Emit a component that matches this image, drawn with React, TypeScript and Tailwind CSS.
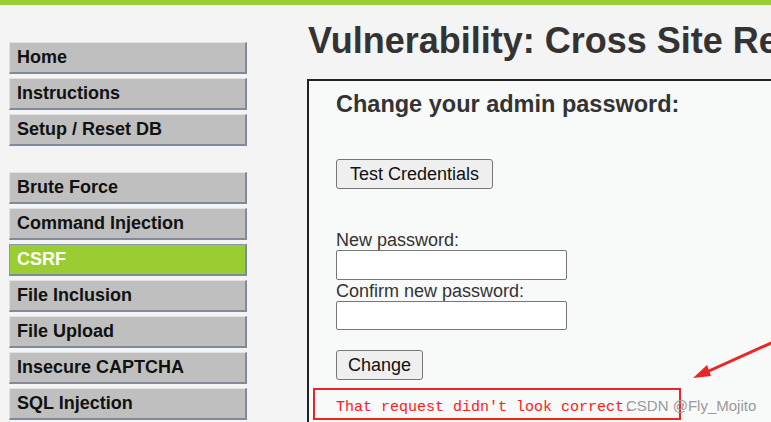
import React from 'react';

const topMenu = ['Home', 'Instructions', 'Setup / Reset DB'];
const vulnMenu = [
  'Brute Force',
  'Command Injection',
  'CSRF',
  'File Inclusion',
  'File Upload',
  'Insecure CAPTCHA',
  'SQL Injection',
];

const MenuItem: React.FC<{ label: string; selected?: boolean }> = ({ label, selected }) => {
  const base =
    'h-[32px] flex items-center pl-[7px] text-[18px] font-bold border-t border-l border-b-2 border-r-2';
  return (
    <div
      className={
        selected
          ? `${base} bg-[#9acd32] text-white border-t-[#8d9bb0] border-l-[#8d9bb0] border-b-[#7d8aa0] border-r-[#7d8aa0]`
          : `${base} bg-[#bfbfbf] text-[#111] border-t-[#e2e2e2] border-l-[#e2e2e2] border-b-[#808a9a] border-r-[#808a9a]`
      }
    >
      {label}
    </div>
  );
};

export default function App() {
  return (
    <div
      className="relative w-[771px] h-[422px] overflow-hidden bg-[#f4f4f4]"
      style={{ fontFamily: '"Liberation Sans", Arial, sans-serif' }}
    >
      <div className="h-[5px] bg-[#9acd32]" />

      <div className="flex">
        {/* Side menu */}
        <div className="w-[238px] ml-[9px] mt-[37px] shrink-0 flex flex-col">
          <div className="flex flex-col gap-[4px]">
            {topMenu.map((m) => (
              <MenuItem key={m} label={m} />
            ))}
          </div>
          <div className="flex flex-col gap-[4px] mt-[26px]">
            {vulnMenu.map((m) => (
              <MenuItem key={m} label={m} selected={m === 'CSRF'} />
            ))}
          </div>
        </div>

        {/* Main body */}
        <div className="ml-[60px] flex-1 min-w-0">
          <h1 className="mt-[15px] ml-[1px] text-[36px] font-bold leading-[41px] text-[#333] whitespace-nowrap">
            Vulnerability: Cross Site Request Forgery (CSRF)
          </h1>

          <div className="mt-[18px] w-[620px] h-[420px] border-2 border-[#222] bg-[#f8f9f9] pl-[27px] pt-[10px]">
            <h3 className="text-[23.5px] font-bold leading-[27px] text-[#333]">Change your admin password:</h3>

            <button className="mt-[41px] h-[30px] px-[13px] text-[18px] text-[#111] bg-[#efefef] border border-[#767676] rounded-[3px]">
              Test Credentials
            </button>

            <div className="mt-[41px] text-[18px] leading-[20px] text-[#333]">New password:</div>
            <div className="w-[231px] h-[30px] bg-white border border-[#767676] rounded-[2px]" />
            <div className="mt-[1px] text-[18px] leading-[20px] text-[#333]">Confirm new password:</div>
            <div className="w-[231px] h-[29px] bg-white border border-[#767676] rounded-[2px]" />

            <button className="mt-[20px] h-[30px] px-[11px] text-[18px] text-[#111] bg-[#efefef] border border-[#767676] rounded-[3px]">
              Change
            </button>

            <pre
              className="mt-[19px] text-[15px] leading-[18px] text-[#ff1a1a]"
              style={{ fontFamily: '"Liberation Mono", "DejaVu Sans Mono", monospace' }}
            >
              That request didn't look correct.
            </pre>
          </div>
        </div>
      </div>

      {/* annotation: red box */}
      <div className="absolute left-[313px] top-[388px] w-[368px] h-[32px] border-2 border-[#ee2424]" />

      {/* annotation: red arrow */}
      <svg className="absolute inset-0" width="771" height="422" viewBox="0 0 771 422">
        <line x1="780" y1="339" x2="700" y2="375" stroke="#ee2424" strokeWidth="3" />
        <polygon points="693,378 707,365 711,376" fill="#ee2424" />
      </svg>

      {/* watermark */}
      <div className="absolute left-[626px] top-[397px] text-[15px] leading-[17px] text-[#9a9a9a] whitespace-nowrap">
        CSDN @Fly_Mojito
      </div>
    </div>
  );
}
